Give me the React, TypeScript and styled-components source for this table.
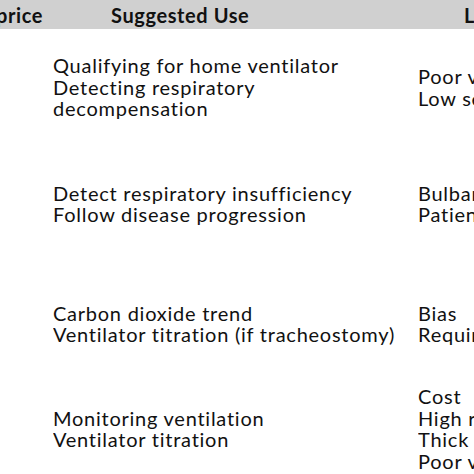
import styled, { createGlobalStyle } from "styled-components";

const GlobalStyle = createGlobalStyle`
  html, body {
    margin: 0;
    padding: 0;
    background: #ffffff;
    overflow: hidden;
  }
  body {
    font-family: Lato, "Liberation Sans", sans-serif;
    color: #111111;
  }
`;

const Viewport = styled.div`
  width: 474px;
  height: 474px;
  overflow: hidden;
`;

const Table = styled.div`
  display: grid;
  grid-template-columns: 57px 365px 220px;
  margin-left: -4px;
`;

const HeaderCell = styled.div<{ $indent?: number }>`
  background: #d0d0d0;
  height: 29px;
  display: flex;
  align-items: center;
  padding-left: ${({ $indent }) => $indent ?? 0}px;
  font-weight: 700;
  font-size: 20px;
  letter-spacing: 0.6px;
  white-space: nowrap;
  overflow: hidden;
`;

const Cell = styled.div<{ $height: number }>`
  height: ${({ $height }) => $height}px;
  display: flex;
  flex-direction: column;
  justify-content: center;
  font-size: 20px;
  letter-spacing: 0.75px;
  line-height: 21.5px;
  white-space: nowrap;
  overflow: hidden;
`;

const rows = [
  {
    height: 117,
    use: ["Qualifying for home ventilator", "Detecting respiratory", "decompensation"],
    limits: ["Poor validity", "Low sensitivity"],
  },
  {
    height: 116,
    use: ["Detect respiratory insufficiency", "Follow disease progression"],
    limits: ["Bulbar weakness", "Patient effort"],
  },
  {
    height: 124,
    use: ["Carbon dioxide trend", "Ventilator titration (if tracheostomy)"],
    limits: ["Bias", "Requires calibration"],
  },
  {
    height: 86,
    use: ["Monitoring ventilation", "Ventilator titration"],
    limits: ["Cost", "High risk", "Thick skin", "Poor validity"],
  },
];

export default function App() {
  return (
    <Viewport>
      <GlobalStyle />
      <Table>
        <HeaderCell>price</HeaderCell>
        <HeaderCell $indent={58}>Suggested Use</HeaderCell>
        <HeaderCell $indent={46}>Limitations</HeaderCell>
        {rows.map((row, i) => (
          <>
            <Cell key={`p${i}`} $height={row.height} />
            <Cell key={`u${i}`} $height={row.height}>
              {row.use.map((line) => (
                <span key={line}>{line}</span>
              ))}
            </Cell>
            <Cell key={`l${i}`} $height={row.height}>
              {row.limits.map((line) => (
                <span key={line}>{line}</span>
              ))}
            </Cell>
          </>
        ))}
      </Table>
    </Viewport>
  );
}
